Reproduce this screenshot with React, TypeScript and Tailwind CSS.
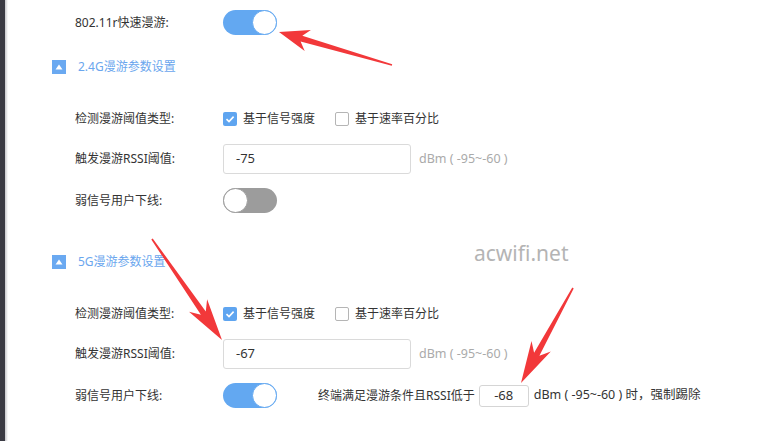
import React from "react";

const font = { fontFamily: '"Noto Sans", "Noto Sans CJK SC", sans-serif' };

function Toggle({ on }: { on: boolean }) {
  return (
    <div
      className={`w-[54px] h-[25px] rounded-full flex items-center ${
        on ? "bg-[#63a8f1] justify-end" : "bg-[#9c9c9c] justify-start"
      }`}
    >
      <div
        className={`w-[25px] h-[25px] rounded-full bg-white border-[1.5px] ${
          on ? "border-[#63a8f1]" : "border-[#9c9c9c]"
        }`}
      />
    </div>
  );
}

function Check({ checked, label }: { checked: boolean; label: string }) {
  return (
    <div className="flex items-center gap-[6px]">
      {checked ? (
        <div className="w-[14px] h-[14px] rounded-[2px] bg-[#5fa5f0] flex items-center justify-center">
          <svg width="10" height="10" viewBox="0 0 10 10">
            <polyline points="1.5,5.2 4,7.6 8.6,2.6" fill="none" stroke="white" strokeWidth="1.6" />
          </svg>
        </div>
      ) : (
        <div className="w-[14px] h-[14px] rounded-[2px] bg-white border border-[#b5b5b5]" />
      )}
      <span className="text-[12px] text-[#333]">{label}</span>
    </div>
  );
}

function SectionHead({ title }: { title: string }) {
  return (
    <div className="flex items-center gap-[12px] h-[14px]">
      <div className="w-[14px] h-[14px] bg-[#6aa9f1] flex items-center justify-center">
        <svg width="8" height="6" viewBox="0 0 8 6">
          <polygon points="4,0.5 7.5,5.5 0.5,5.5" fill="white" />
        </svg>
      </div>
      <span className="text-[12px] text-[#6aa6ee]">{title}</span>
    </div>
  );
}

function Row({ label, children, className }: { label: string; children: React.ReactNode; className?: string }) {
  return (
    <div className={`flex items-center ml-[23px] ${className ?? ""}`}>
      <div className="w-[148px] text-[12px] text-[#333]">{label}</div>
      {children}
    </div>
  );
}

function RssiInput({ value }: { value: string }) {
  return (
    <div className="flex items-center">
      <div className="w-[188px] h-[30px] border border-[#dadada] rounded-[3px] flex items-center pl-[12px] text-[13px] text-[#333]">
        {value}
      </div>
      <span className="ml-[8px] text-[12.5px] text-[#aaa]">dBm ( -95~-60 )</span>
    </div>
  );
}

function arrowPoints(x1: number, y1: number, x2: number, y2: number, headLen: number, headW: number, neckW: number) {
  const dx = x2 - x1;
  const dy = y2 - y1;
  const len = Math.hypot(dx, dy);
  const ux = dx / len;
  const uy = dy / len;
  const px = -uy;
  const py = ux;
  const pts: [number, number][] = [
    [0, -0.8],
    [len - headLen * 0.78, -neckW / 2],
    [len - headLen, -headW],
    [len, 0],
    [len - headLen, headW],
    [len - headLen * 0.78, neckW / 2],
    [0, 0.8],
  ];
  return pts.map(([a, c]) => `${(x1 + ux * a + px * c).toFixed(1)},${(y1 + uy * a + py * c).toFixed(1)}`).join(" ");
}

export default function App() {
  return (
    <div className="relative w-[768px] h-[441px] bg-white flex overflow-hidden" style={font}>
      {/* left edge of window */}
      <div className="w-[5px] bg-[#3b3b44] shrink-0" />
      <div className="w-[3px] bg-gradient-to-r from-[#c8c8cc] to-white shrink-0" />

      <div className="flex-1 flex flex-col pl-[44px]">
        <Row label="802.11r快速漫游:" className="mt-[10px]">
          <Toggle on />
        </Row>

        <div className="mt-[25px]">
          <SectionHead title="2.4G漫游参数设置" />
        </div>

        <Row label="检测漫游阈值类型:" className="mt-[38px] h-[14px]">
          <div className="flex items-center gap-[20px]">
            <Check checked label="基于信号强度" />
            <Check checked={false} label="基于速率百分比" />
          </div>
        </Row>

        <Row label="触发漫游RSSI阈值:" className="mt-[18px]">
          <RssiInput value="-75" />
        </Row>

        <Row label="弱信号用户下线:" className="mt-[14px]">
          <Toggle on={false} />
        </Row>

        <div className="mt-[42px]">
          <SectionHead title="5G漫游参数设置" />
        </div>

        <Row label="检测漫游阈值类型:" className="mt-[38px] h-[14px]">
          <div className="flex items-center gap-[20px]">
            <Check checked label="基于信号强度" />
            <Check checked={false} label="基于速率百分比" />
          </div>
        </Row>

        <Row label="触发漫游RSSI阈值:" className="mt-[18px]">
          <RssiInput value="-67" />
        </Row>

        <Row label="弱信号用户下线:" className="mt-[14px]">
          <Toggle on />
          <span className="ml-[41px] text-[12px] text-[#333]">终端满足漫游条件且RSSI低于</span>
          <div className="ml-[4px] w-[50px] h-[22px] border border-[#d5d5d5] rounded-[3px] flex items-center justify-center text-[13px] text-[#333]">
            -68
          </div>
          <span className="ml-[5px] text-[12.5px] text-[#333]">dBm ( -95~-60 ) 时，强制踢除</span>
        </Row>
      </div>

      {/* watermark */}
      <div className="absolute left-[474px] top-[243px] text-[21px] text-[#b4b4b4] leading-none">acwifi.net</div>

      {/* annotation arrows */}
      <svg className="absolute inset-0 pointer-events-none" width="768" height="441">
        <polygon points={arrowPoints(392, 65, 279, 32, 30, 11, 6)} fill="#f2383a" />
        <polygon points={arrowPoints(152, 239, 222, 340, 42, 11, 6)} fill="#f2383a" />
        <polygon points={arrowPoints(573, 288, 521, 383, 42, 11, 6)} fill="#f2383a" />
      </svg>
    </div>
  );
}
